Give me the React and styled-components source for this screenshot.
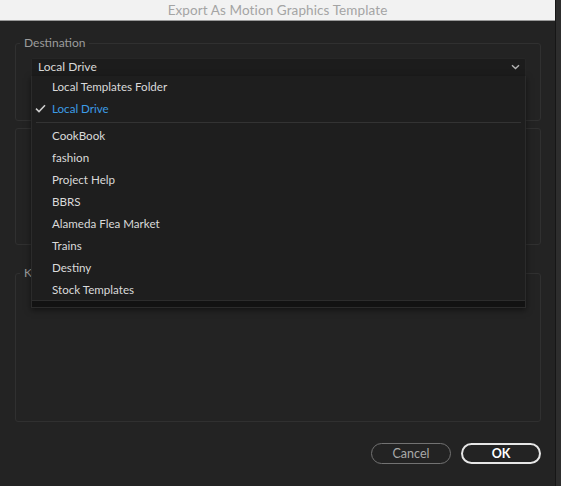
import React from 'react';
import styled, { createGlobalStyle } from 'styled-components';

const GlobalStyle = createGlobalStyle`
  html, body {
    margin: 0;
    padding: 0;
    background: #2d2d2d;
    overflow: hidden;
  }
  body {
    font-family: Lato, "Liberation Sans", sans-serif;
    -webkit-font-smoothing: antialiased;
  }
`;

const Screen = styled.div`
  display: flex;
  width: 561px;
  height: 486px;
  background: #2d2d2d;
`;

const Dialog = styled.div`
  display: flex;
  flex-direction: column;
  width: 555px;
  height: 486px;
  background: #232323;
  border-right: 1px solid #161616;
`;

const TitleBar = styled.div`
  display: flex;
  align-items: center;
  justify-content: center;
  height: 20px;
  background: #f2f2f2;
  border-bottom: 1px solid #9a9a9a;
  color: #a4a4a4;
  font-size: 13.5px;
  letter-spacing: 0.1px;
`;

const Body = styled.div`
  display: flex;
  flex-direction: column;
  padding: 15px 14px 0 15px;
`;

const Group = styled.fieldset`
  margin: ${(p) => p.$top || 0}px 0 0 0;
  padding: 8px 14px ${(p) => p.$bottom || 0}px 15px;
  min-height: ${(p) => p.$height || 0}px;
  box-sizing: border-box;
  border: 1px solid #303030;
  border-radius: 3px;
  min-width: 0;
`;

const Legend = styled.legend`
  margin-left: -11px;
  padding: 0 4px;
  font-size: 12px;
  line-height: 14px;
  color: #9c9c9c;
`;

const Field = styled.div`
  position: relative;
`;

const Select = styled.div`
  display: flex;
  align-items: center;
  justify-content: space-between;
  height: 18px;
  padding: 0 5px 2px 6px;
  box-sizing: border-box;
  background: #1c1c1c;
  border: 1px solid #262626;
  border-bottom: none;
  border-radius: 2px 2px 0 0;
  color: #d8d8d8;
  font-size: 12px;
`;

const Menu = styled.div`
  position: absolute;
  top: 18px;
  left: 0;
  right: 0;
  z-index: 5;
  background: #1e1e1e;
  border: 1px solid #2b2b2b;
  border-top: none;
  box-shadow: 0 2px 6px rgba(0, 0, 0, 0.5);
`;

const Item = styled.div`
  display: flex;
  align-items: center;
  gap: 6px;
  height: 22px;
  padding: 0 0 2px 3px;
  box-sizing: border-box;
  color: ${(p) => (p.$selected ? '#3c9ce6' : '#dadada')};
  font-size: 11.6px;
`;

const Check = styled.span`
  display: flex;
  align-items: center;
  width: 11px;
  height: 11px;
`;

const Divider = styled.div`
  height: 1px;
  margin: 2px 4px 2px 4px;
  background: #333333;
`;

const MenuFooter = styled.div`
  height: 6px;
  margin-top: -1px;
  background: #121212;
  border-top: 1px solid #2c2c2c;
`;

const Actions = styled.div`
  display: flex;
  justify-content: flex-end;
  gap: 10px;
  margin-top: 21px;
`;

const Button = styled.button`
  width: 80px;
  height: 21px;
  padding: 0 0 1px 0;
  box-sizing: border-box;
  border-radius: 11px;
  background: transparent;
  font-family: inherit;
  font-size: 12.5px;
  border: ${(p) => (p.$primary ? '2px solid #e6e6e6' : '1.5px solid #727272')};
  color: ${(p) => (p.$primary ? '#ffffff' : '#a9a9a9')};
  font-weight: ${(p) => (p.$primary ? 700 : 400)};
`;

const Chevron = () => (
  <svg width="9" height="6" viewBox="0 0 9 6">
    <path d="M1 1.2 L4.5 4.5 L8 1.2" fill="none" stroke="#b4b4b4" strokeWidth="1.4" />
  </svg>
);

const CheckMark = () => (
  <svg width="11" height="9" viewBox="0 0 11 9">
    <path d="M1 4.6 L4 7.6 L10 1.2" fill="none" stroke="#cfcfcf" strokeWidth="1.5" />
  </svg>
);

const topItems = [
  { label: 'Local Templates Folder' },
  { label: 'Local Drive', selected: true },
];

const projects = [
  'CookBook',
  'fashion',
  'Project Help',
  'BBRS',
  'Alameda Flea Market',
  'Trains',
  'Destiny',
  'Stock Templates',
];

function App() {
  return (
    <>
      <GlobalStyle />
      <Screen>
        <Dialog>
          <TitleBar>Export As Motion Graphics Template</TitleBar>
          <Body>
            <Group $bottom={44}>
              <Legend>Destination</Legend>
              <Field>
                <Select>
                  Local Drive
                  <Chevron />
                </Select>
                <Menu>
                  {topItems.map((item) => (
                    <Item key={item.label} $selected={item.selected}>
                      <Check>{item.selected && <CheckMark />}</Check>
                      {item.label}
                    </Item>
                  ))}
                  <Divider />
                  {projects.map((name) => (
                    <Item key={name}>
                      <Check />
                      {name}
                    </Item>
                  ))}
                  <MenuFooter />
                </Menu>
              </Field>
            </Group>
            <Group $top={7} $height={117} />
            <Group $top={21} $height={156}>
              <Legend>Keywords</Legend>
            </Group>
            <Actions>
              <Button>Cancel</Button>
              <Button $primary>OK</Button>
            </Actions>
          </Body>
        </Dialog>
      </Screen>
    </>
  );
}

export default App;
